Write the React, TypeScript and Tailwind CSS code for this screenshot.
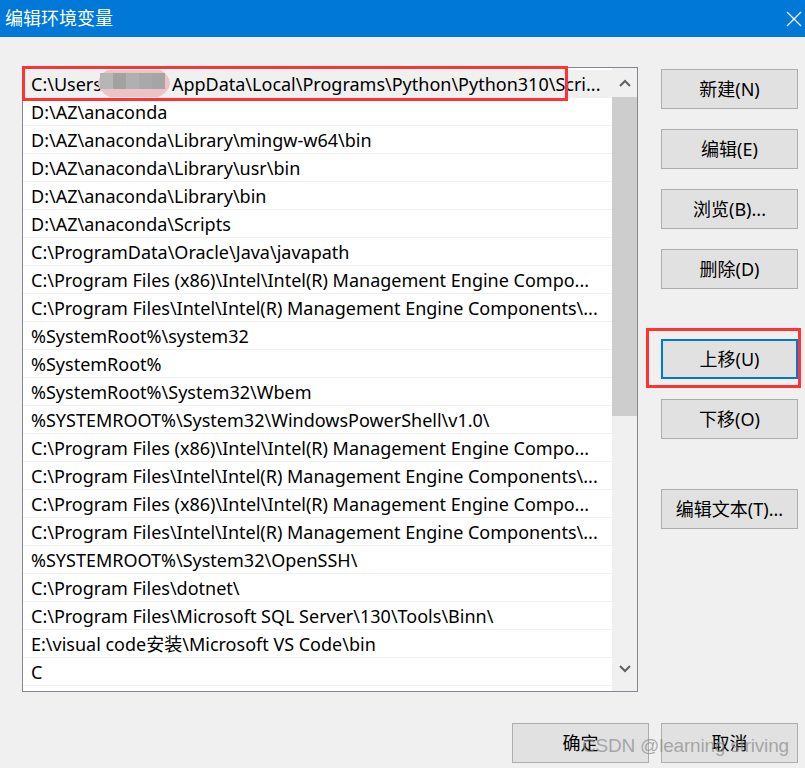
const rows: string[] = [
  'D:\\AZ\\anaconda',
  'D:\\AZ\\anaconda\\Library\\mingw-w64\\bin',
  'D:\\AZ\\anaconda\\Library\\usr\\bin',
  'D:\\AZ\\anaconda\\Library\\bin',
  'D:\\AZ\\anaconda\\Scripts',
  'C:\\ProgramData\\Oracle\\Java\\javapath',
  'C:\\Program Files (x86)\\Intel\\Intel(R) Management Engine Compo...',
  'C:\\Program Files\\Intel\\Intel(R) Management Engine Components\\...',
  '%SystemRoot%\\system32',
  '%SystemRoot%',
  '%SystemRoot%\\System32\\Wbem',
  '%SYSTEMROOT%\\System32\\WindowsPowerShell\\v1.0\\',
  'C:\\Program Files (x86)\\Intel\\Intel(R) Management Engine Compo...',
  'C:\\Program Files\\Intel\\Intel(R) Management Engine Components\\...',
  'C:\\Program Files (x86)\\Intel\\Intel(R) Management Engine Compo...',
  'C:\\Program Files\\Intel\\Intel(R) Management Engine Components\\...',
  '%SYSTEMROOT%\\System32\\OpenSSH\\',
  'C:\\Program Files\\dotnet\\',
  'C:\\Program Files\\Microsoft SQL Server\\130\\Tools\\Binn\\',
  'E:\\visual code安装\\Microsoft VS Code\\bin',
  'C',
];

const Btn = ({ label, focused = false }: { label: string; focused?: boolean }) => (
  <button
    type="button"
    className={
      focused
        ? 'w-[137px] h-[40px] bg-[#e1e1e1] border-2 border-[#0078d7] text-[18px] text-black'
        : 'w-[137px] h-[40px] bg-[#e1e1e1] border border-[#adadad] text-[18px] text-black'
    }
  >
    {label}
  </button>
);

// blurred-out user name
const Blob = () => (
  <span className="relative inline-block w-[70px] h-[20px] align-middle">
    <svg className="absolute left-[-6px] top-[-12px]" width="76" height="42" viewBox="0 0 76 42">
      <ellipse cx="38" cy="21" rx="36" ry="19" fill="#eec3c3" />
      <rect x="4" y="11" width="13" height="16" fill="#b6b6b6" />
      <rect x="17" y="11" width="13" height="16" fill="#a2a29e" />
      <rect x="30" y="11" width="13" height="16" fill="#b0b0b0" />
      <rect x="43" y="11" width="13" height="16" fill="#a9a9a9" />
      <rect x="56" y="11" width="13" height="16" fill="#a5a5a5" />
    </svg>
  </span>
);

export default function App() {
  return (
    <div className="relative w-[805px] h-[768px] overflow-hidden bg-[#f0f0f0] font-['Noto_Sans','Noto_Sans_CJK_SC',sans-serif] text-black">
      <div className="flex items-center justify-between h-[37px] bg-[#0078d7] pl-[5px] pr-[3px] text-white text-[18px]">
        <span>编辑环境变量</span>
        <svg width="16" height="16" viewBox="0 0 16 16" stroke="white" strokeWidth="1.2">
          <path d="M1 1 L15 15 M15 1 L1 15" />
        </svg>
      </div>

      <div className="flex pl-[22px] pt-[30px]">
        <div className="relative flex w-[616px] h-[625px] border border-[#828790] bg-white">
          <div className="flex-1 min-w-0 pt-[2px] text-[18px]">
            <div className="h-[28px] flex items-center pl-[8px] pt-[1px] bg-[#f0f0f0] border-b border-[#f0f0f0] whitespace-nowrap overflow-hidden">
              C:\Users
              <Blob />
              AppData\Local\Programs\Python\Python310\Scri...
            </div>
            {rows.map((r, i) => (
              <div
                key={i}
                className="h-[28px] flex items-center pl-[8px] pt-[1px] border-b border-[#f0f0f0] whitespace-nowrap overflow-hidden"
              >
                {r}
              </div>
            ))}
          </div>
          <div className="flex flex-col w-[25px] bg-[#f0f0f0]">
            <div className="h-[29px] flex items-center justify-center">
              <svg width="12" height="8" viewBox="0 0 12 8" fill="none" stroke="#606060" strokeWidth="2">
                <path d="M1 7 L6 2 L11 7" />
              </svg>
            </div>
            <div className="h-[319px] bg-[#cdcdcd]" />
            <div className="flex-1" />
            <div className="h-[26px] flex items-start justify-center">
              <svg width="12" height="8" viewBox="0 0 12 8" fill="none" stroke="#606060" strokeWidth="2">
                <path d="M1 1 L6 6 L11 1" />
              </svg>
            </div>
          </div>
        </div>

        <div className="flex flex-col ml-[23px] pt-[2px] gap-[20px]">
          <Btn label="新建(N)" />
          <Btn label="编辑(E)" />
          <Btn label="浏览(B)..." />
          <Btn label="删除(D)" />
          <div className="mt-[30px]">
            <Btn label="上移(U)" focused />
          </div>
          <Btn label="下移(O)" />
          <div className="mt-[30px]">
            <Btn label="编辑文本(T)..." />
          </div>
        </div>
      </div>

      <div className="flex justify-end gap-[12px] pr-[7px] mt-[31px]">
        <Btn label="确定" />
        <Btn label="取消" />
      </div>

      {/* red annotation boxes */}
      <div className="absolute left-[22px] top-[66px] w-[546px] h-[35px] border-[3px] border-[#ff3333]" />
      <div className="absolute left-[646px] top-[328px] w-[155px] h-[60px] border-[3px] border-[#ff3333]" />

      <div className="absolute left-[582px] top-[732px] font-['Liberation_Sans',sans-serif] text-[19px] tracking-[-0.2px] text-[#8a8a8a]/70 whitespace-nowrap">
        CSDN @learning striving
      </div>
    </div>
  );
}
